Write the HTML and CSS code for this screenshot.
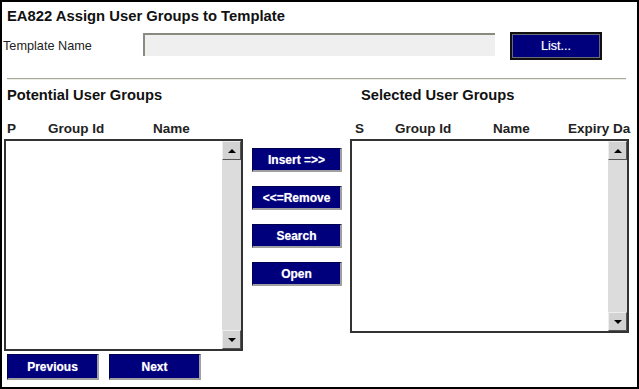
FILE: index.html
```html
<!DOCTYPE html>
<html>
<head>
<meta charset="utf-8">
<link rel="stylesheet" href="styles.css">
</head>
<body>
<div class="window">
  <h1 class="title">EA822 Assign User Groups to Template</h1>
  <div class="name-row">
    <span class="name-label">Template Name</span>
    <div class="name-input"></div>
    <button class="btn btn-list">List...</button>
  </div>
  <div class="divider"></div>
  <div class="groups">
    <section class="panel panel-left">
      <h2 class="panel-title">Potential User Groups</h2>
      <div class="cols cols-left"><span>P</span><span>Group Id</span><span>Name</span></div>
      <div class="listbox listbox-left">
        <div class="list-body"></div>
        <div class="scrollbar">
          <div class="sb-btn"><span class="arrow-up"></span></div>
          <div class="sb-track"></div>
          <div class="sb-btn"><span class="arrow-down"></span></div>
        </div>
      </div>
      <div class="pager">
        <button class="btn btn-pager">Previous</button>
        <button class="btn btn-pager">Next</button>
      </div>
    </section>
    <div class="actions">
      <button class="btn btn-action">Insert =&gt;&gt;</button>
      <button class="btn btn-action">&lt;&lt;=Remove</button>
      <button class="btn btn-action">Search</button>
      <button class="btn btn-action">Open</button>
    </div>
    <section class="panel panel-right">
      <h2 class="panel-title panel-title-right">Selected User Groups</h2>
      <div class="cols cols-right"><span>S</span><span>Group Id</span><span>Name</span><span>Expiry Da</span></div>
      <div class="listbox listbox-right">
        <div class="list-body"></div>
        <div class="scrollbar">
          <div class="sb-btn"><span class="arrow-up"></span></div>
          <div class="sb-track"></div>
          <div class="sb-btn"><span class="arrow-down"></span></div>
        </div>
      </div>
    </section>
  </div>
</div>
</body>
</html>
```

FILE: styles.css
```css
* { box-sizing: border-box; }
html, body { margin: 0; padding: 0; background: #fff; }
body { font-family: "Liberation Sans", Arial, sans-serif; color: #111; }

.window {
  width: 639px;
  height: 389px;
  border: 2px solid #000;
  background: #fff;
  overflow: hidden;
}

.title {
  margin: 6px 0 0 5px;
  font-size: 14.8px;
  line-height: 16px;
  font-weight: bold;
  color: #111;
}

.name-row {
  display: flex;
  align-items: flex-start;
  margin-top: 8px;
  padding-left: 1px;
  height: 28px;
}
.name-label {
  width: 140px;
  font-size: 12.7px;
  line-height: 28px;
  color: #222;
}
.name-input {
  width: 352px;
  height: 23px;
  margin-top: 1px;
  background: #efefef;
  border-top: 2px solid #8a8a80;
  border-left: 2px solid #8a8a80;
}

.btn {
  font-family: "Liberation Sans", Arial, sans-serif;
  font-weight: bold;
  font-size: 12px;
  color: #fff;
  background: #00007c;
  padding: 0;
  cursor: pointer;
  text-shadow: 0 0 1px #8888cc;
}
.btn-list {
  width: 92px;
  height: 28px;
  margin-left: 15px;
  border: 2px solid #111;
  box-shadow: inset 0 0 0 1px #6a6a78;
  font-weight: normal;
  font-size: 12.5px;
}

.divider {
  margin: 18px 11px 0 5px;
  height: 2px;
  border-top: 1px solid #a8a89c;
  border-bottom: 1px solid #ecece6;
}

.groups {
  display: flex;
  align-items: flex-start;
  margin-top: 7px;
  padding-left: 2px;
}

.panel-title {
  margin: 0;
  font-size: 14.7px;
  line-height: 16px;
  font-weight: bold;
  color: #111;
  padding-left: 3px;
  white-space: nowrap;
}
.panel-title-right { padding-left: 11px; }

.panel-left { width: 239px; }
.panel-right { width: 279px; margin-left: 8px; }

.cols {
  display: grid;
  margin-top: 18px;
  font-size: 13.5px;
  line-height: 16px;
  font-weight: bold;
  color: #222;
  white-space: nowrap;
}
.cols-left { grid-template-columns: 41px 105px auto; padding-left: 3px; }
.cols-right { grid-template-columns: 40px 98px 75px auto; padding-left: 5px; }

.listbox {
  display: flex;
  margin-top: 2px;
  border: 2px solid #333;
  background: #fff;
}
.listbox-left { height: 212px; }
.listbox-right { height: 194px; }
.list-body { flex: 1; }

.scrollbar {
  width: 19px;
  display: flex;
  flex-direction: column;
  background: #dcdcdc;
}
.sb-btn {
  height: 19px;
  background: #d2d2d2;
  border-top: 1px solid #eee;
  border-left: 1px solid #eee;
  border-right: 1px solid #555;
  border-bottom: 1px solid #555;
  display: flex;
  align-items: center;
  justify-content: center;
}
.sb-track { flex: 1; }
.arrow-up, .arrow-down {
  width: 0;
  height: 0;
  border-left: 4px solid transparent;
  border-right: 4px solid transparent;
}
.arrow-up { border-bottom: 4px solid #000; }
.arrow-down { border-top: 4px solid #000; }

.pager {
  display: flex;
  gap: 10px;
  margin-top: 3px;
  padding-left: 3px;
}
.btn-pager {
  width: 92px;
  height: 26px;
  border-top: 1px solid #000050;
  border-left: 1px solid #000050;
  border-right: 2px solid #a0a0a0;
  border-bottom: 2px solid #a0a0a0;
}

.actions {
  display: flex;
  flex-direction: column;
  gap: 14px;
  width: 90px;
  margin-left: 9px;
  padding-top: 61px;
}
.btn-action {
  width: 90px;
  height: 24px;
  border-top: 1px solid #000050;
  border-left: 1px solid #000050;
  border-right: 2px solid #a0a0a0;
  border-bottom: 2px solid #a0a0a0;
}
```
